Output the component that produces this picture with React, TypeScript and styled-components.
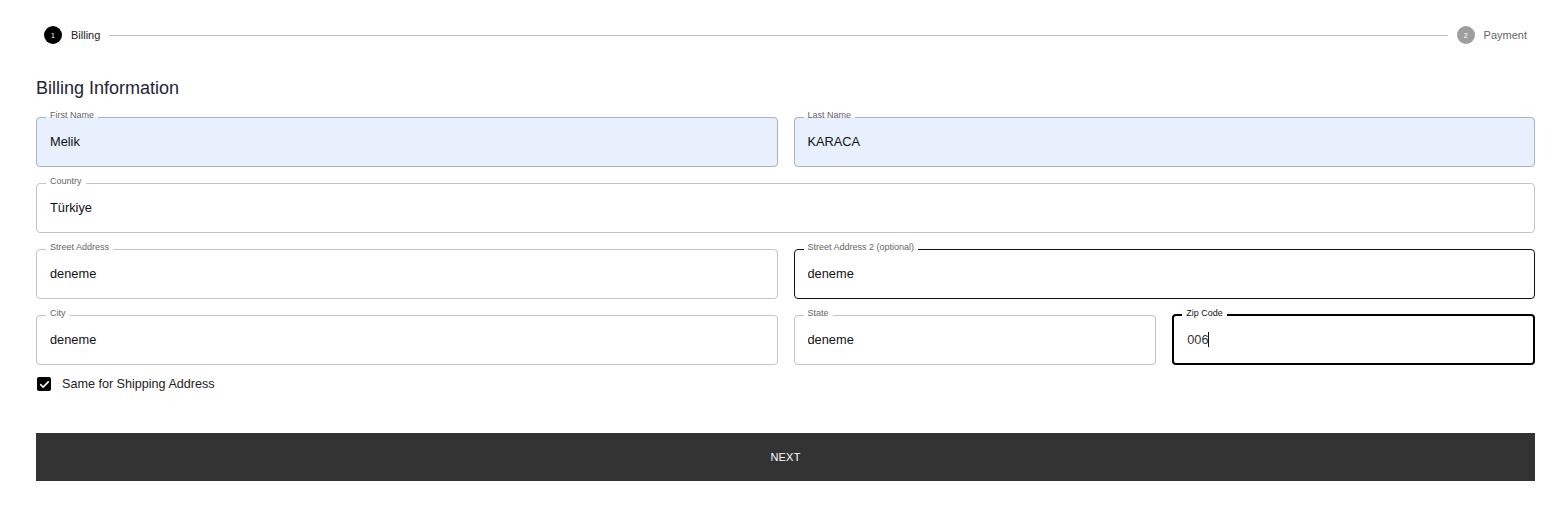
import React from "react";
import styled, { createGlobalStyle } from "styled-components";

const Global = createGlobalStyle`
  html, body { margin: 0; padding: 0; background: #fff; }
  body { font-family: "Liberation Sans", Arial, sans-serif; }
  * { box-sizing: border-box; }
`;

const Page = styled.div`
  padding: 26px 26px 0 36px;
  width: 1561px;
`;

const Stepper = styled.div`
  display: flex;
  align-items: center;
  padding: 0 8px;
  height: 18px;
`;

const Step = styled.div`
  display: flex;
  align-items: center;
  gap: 9px;
`;

const StepCircle = styled.div<{ $active?: boolean }>`
  width: 18px;
  height: 18px;
  border-radius: 50%;
  background: ${(p) => (p.$active ? "#000" : "#9e9e9e")};
  color: #fff;
  font-size: 7px;
  display: flex;
  align-items: center;
  justify-content: center;
`;

const StepLabel = styled.span<{ $active?: boolean }>`
  font-size: 11px;
  color: ${(p) => (p.$active ? "#222" : "#666")};
`;

const Connector = styled.div`
  flex: 1;
  height: 1px;
  background: #bdbdbd;
  margin: 0 9px;
`;

const Title = styled.h2`
  margin: 33px 0 0;
  font-size: 18px;
  line-height: 22px;
  font-weight: 400;
  color: #1e2535;
`;

const Form = styled.div`
  margin-top: 18px;
  display: flex;
  flex-direction: column;
  gap: 16px;
`;

const Row = styled.div<{ $cols: number }>`
  display: grid;
  grid-template-columns: ${(p) => (p.$cols === 1 ? "1fr" : "1fr 1fr")};
  gap: 16px;
`;

const Field = styled.div<{ $autofill?: boolean }>`
  position: relative;
  height: 50px;
  border-radius: 4px;
  background: ${(p) => (p.$autofill ? "#e8f0fe" : "transparent")};
`;

const Input = styled.input<{ $focus?: boolean }>`
  width: 100%;
  height: 100%;
  border: none;
  outline: none;
  background: transparent;
  padding: 0 ${(p) => (p.$focus ? "15px" : "14px")} 2px;
  font-family: "Liberation Sans", Arial, sans-serif;
  font-size: 12.8px;
  color: ${(p) => (p.$focus ? "#333" : "#111")};
`;

const Caret = styled.span`
  position: absolute;
  left: 36px;
  top: 17px;
  width: 1px;
  height: 15px;
  background: #111;
`;

type Variant = "normal" | "autofill" | "hover" | "focus";

const borderFor = (v: Variant) =>
  v === "autofill"
    ? "1px solid #a9b3c6"
    : v === "hover"
    ? "1px solid #111"
    : v === "focus"
    ? "2px solid #000"
    : "1px solid #c4c4c4";

const Outline = styled.fieldset<{ $v: Variant }>`
  position: absolute;
  top: -6px;
  left: 0;
  right: 0;
  bottom: 0;
  margin: 0;
  padding: 0 9px;
  border: ${(p) => borderFor(p.$v)};
  border-radius: 4px;
  pointer-events: none;
`;

const Legend = styled.legend<{ $focus?: boolean }>`
  padding: 0 4px 3px;
  font-size: 9px;
  line-height: 9px;
  color: ${(p) => (p.$focus ? "#111" : "#666")};
  margin-left: ${(p) => (p.$focus ? "-1px" : "0")};
`;

const SubGrid = styled.div`
  display: grid;
  grid-template-columns: 1fr 1fr;
  gap: 16px;
`;

const CheckRow = styled.label`
  margin-top: 12px;
  display: flex;
  align-items: center;
  gap: 11px;
  padding-left: 1px;
  font-size: 12.6px;
  color: #222;
`;

const Box = styled.span`
  width: 14px;
  height: 14px;
  border-radius: 2px;
  background: #000;
  display: flex;
  align-items: center;
  justify-content: center;
`;

const Button = styled.button`
  margin-top: 42px;
  width: 100%;
  height: 48px;
  border: none;
  background: #333;
  color: #fff;
  font-family: "Liberation Sans", Arial, sans-serif;
  font-size: 11px;
  font-weight: 500;
  letter-spacing: 0.2px;
`;

const TextField = ({ label, value, v = "normal" }: { label: string; value: string; v?: Variant }) => (
  <Field $autofill={v === "autofill"}>
    <Input readOnly value={value} $focus={v === "focus"} />
    {v === "focus" && <Caret />}
    <Outline $v={v}>
      <Legend $focus={v === "focus"}>{label}</Legend>
    </Outline>
  </Field>
);

export default function App() {
  return (
    <Page>
      <Global />
      <Stepper>
        <Step>
          <StepCircle $active>1</StepCircle>
          <StepLabel $active>Billing</StepLabel>
        </Step>
        <Connector />
        <Step>
          <StepCircle>2</StepCircle>
          <StepLabel>Payment</StepLabel>
        </Step>
      </Stepper>
      <Title>Billing Information</Title>
      <Form>
        <Row $cols={2}>
          <TextField label="First Name" value="Melik" v="autofill" />
          <TextField label="Last Name" value="KARACA" v="autofill" />
        </Row>
        <Row $cols={1}>
          <TextField label="Country" value="Türkiye" />
        </Row>
        <Row $cols={2}>
          <TextField label="Street Address" value="deneme" />
          <TextField label="Street Address 2 (optional)" value="deneme" v="hover" />
        </Row>
        <Row $cols={2}>
          <TextField label="City" value="deneme" />
          <SubGrid>
            <TextField label="State" value="deneme" />
            <TextField label="Zip Code" value="006" v="focus" />
          </SubGrid>
        </Row>
      </Form>
      <CheckRow>
        <Box>
          <svg width="11" height="11" viewBox="0 0 24 24" fill="none" stroke="#fff" strokeWidth="3.5" strokeLinecap="square">
            <path d="M4 12.5l5 5L20 6.5" />
          </svg>
        </Box>
        Same for Shipping Address
      </CheckRow>
      <Button>NEXT</Button>
    </Page>
  );
}
